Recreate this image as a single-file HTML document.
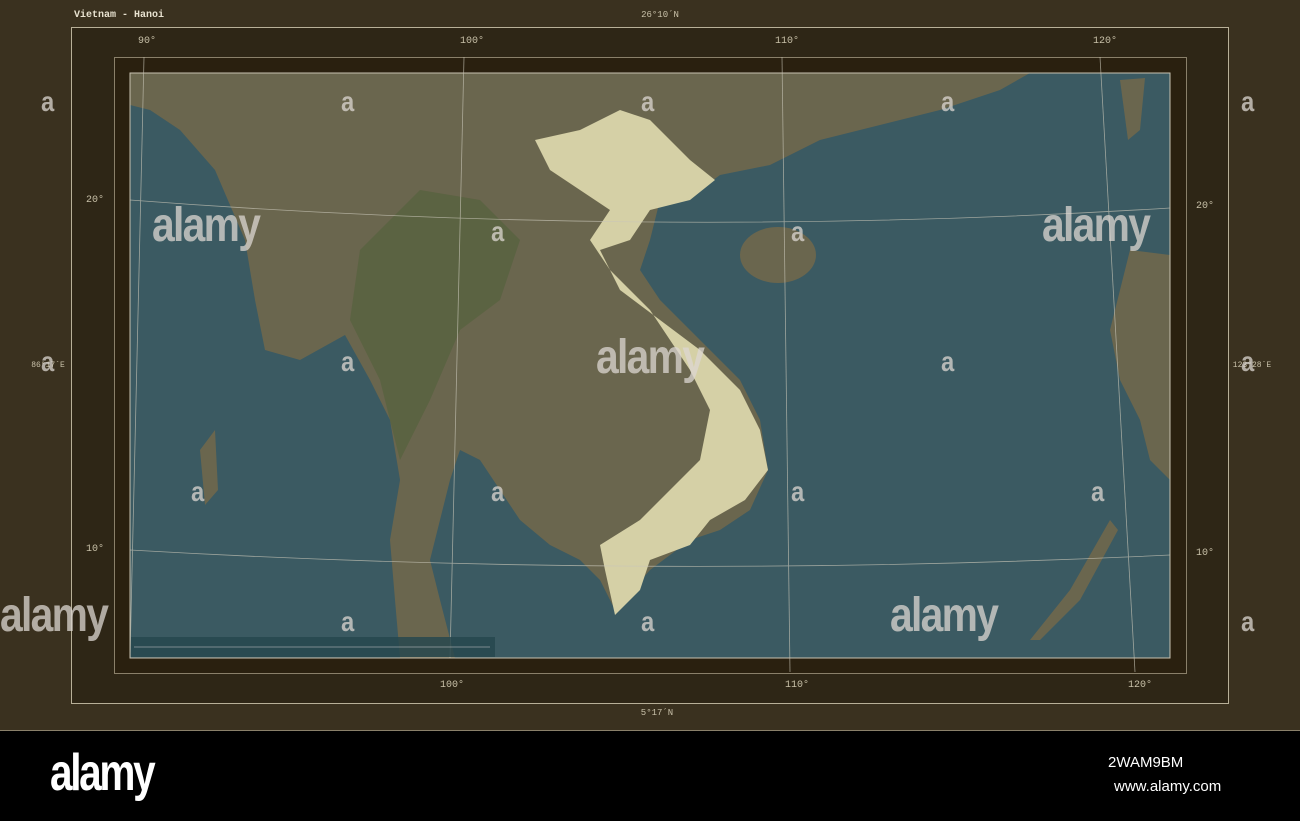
<!DOCTYPE html>
<html><head><meta charset="utf-8"><style>
body{margin:0;width:1300px;height:821px;overflow:hidden;background:#000;font-family:"Liberation Mono",monospace;}
.t{position:absolute;color:#c8c0a8;font-size:10px;white-space:nowrap;transform:translateX(-50%);}
.wm{position:absolute;font-family:"Liberation Sans",sans-serif;font-weight:bold;color:rgba(220,215,210,.75);letter-spacing:-2px;transform:scaleX(.85);transform-origin:left top;}
</style></head><body>
<div style="position:absolute;left:0;top:0;width:1300px;height:730px;background:#3a311f;border-bottom:1px solid #8a806a"></div>
<div style="position:absolute;left:71px;top:27px;width:1156px;height:675px;border:1px solid #b8b098;background:#2e2616"></div>
<div style="position:absolute;left:114px;top:57px;width:1071px;height:615px;border:1px solid #8a806a;background:#2a200f"></div>
<svg style="position:absolute;left:0;top:0" width="1300" height="730">
<rect x="130" y="73" width="1040" height="585" fill="#3b5a62"/>
<polygon fill="#6a664e" points="130,73 1030,73 1000,90 940,110 880,125 820,140 770,165 720,175 700,190 660,200 650,240 640,270 660,300 700,340 740,380 760,420 768,470 750,510 720,530 690,540 650,570 615,610 600,580 580,560 550,545 520,520 500,490 480,460 460,450 450,480 440,520 430,560 440,600 455,658 400,658 395,600 390,540 400,480 390,420 370,380 345,335 300,360 265,350 255,300 245,240 215,170 180,130 150,110 130,105"/>
<polygon fill="#52603a" opacity=".6" points="360,250 420,190 480,200 520,240 500,300 460,330 430,400 400,460 380,380 350,320"/>
<polygon fill="#d5d0a6" points="535,140 580,130 620,110 650,120 690,160 715,180 690,200 650,210 630,240 600,250 620,290 660,320 700,350 740,390 760,430 768,470 745,500 710,520 690,545 650,560 640,590 615,615 605,570 600,545 640,520 670,490 700,460 710,410 690,370 650,310 610,270 590,240 610,210 580,190 550,170"/>
<ellipse cx="778" cy="255" rx="38" ry="28" fill="#6a664e"/>
<polygon fill="#6a664e" points="1130,250 1170,255 1170,480 1150,460 1140,420 1120,380 1110,330"/>
<polygon fill="#6a664e" points="1120,80 1145,78 1140,130 1128,140"/>
<polygon fill="#6a664e" points="1030,640 1070,590 1110,520 1118,530 1080,600 1040,640"/>
<polygon fill="#6a664e" points="200,450 215,430 218,490 205,505"/>
<g stroke="#c9c6b8" stroke-width=".8" fill="none" opacity=".7">
<path d="M130,200 Q650,240 1170,208"/><path d="M130,550 Q650,580 1170,555"/>
<path d="M144,57 L130,658"/><path d="M464,57 L450,658"/><path d="M782,57 L790,672"/><path d="M1100,57 L1135,672"/>
</g>
<rect x="130" y="73" width="1040" height="585" fill="none" stroke="#c8c2b0" stroke-width="1"/>
<rect x="131" y="637" width="364" height="20" fill="#27484f" opacity=".85"/>
<line x1="134" y1="647" x2="490" y2="647" stroke="#ccc" stroke-width=".6"/>
</svg>
<div class="t" style="top:10px;font-weight:bold;color:#e8e2d0;transform:none;left:74px">Vietnam - Hanoi</div>
<div class="t" style="left:660px;top:10px;font-size:9px">26°10´N</div>
<div class="t" style="left:657px;top:708px;font-size:9px">5°17´N</div>
<div class="t" style="left:147px;top:36px">90°</div><div class="t" style="left:472px;top:36px">100°</div><div class="t" style="left:787px;top:36px">110°</div><div class="t" style="left:1105px;top:36px">120°</div>
<div class="t" style="left:452px;top:680px">100°</div><div class="t" style="left:797px;top:680px">110°</div><div class="t" style="left:1140px;top:680px">120°</div>
<div class="t" style="left:95px;top:195px">20°</div><div class="t" style="left:95px;top:544px">10°</div>
<div class="t" style="left:1205px;top:201px">20°</div><div class="t" style="left:1205px;top:548px">10°</div>
<div class="t" style="left:48px;top:361px;font-size:8px">86°17´E</div><div class="t" style="left:1252px;top:361px;font-size:8px">123°28´E</div>
<div class="wm" style="left:152px;top:198px;font-size:48px">alamy</div>
<div class="wm" style="left:1042px;top:198px;font-size:48px">alamy</div>
<div class="wm" style="left:596px;top:330px;font-size:48px">alamy</div>
<div class="wm" style="left:0px;top:588px;font-size:48px">alamy</div>
<div class="wm" style="left:890px;top:588px;font-size:48px">alamy</div>
<div class="wm" style="left:41px;top:86px;font-size:28px">a</div><div class="wm" style="left:341px;top:86px;font-size:28px">a</div><div class="wm" style="left:641px;top:86px;font-size:28px">a</div><div class="wm" style="left:941px;top:86px;font-size:28px">a</div><div class="wm" style="left:1241px;top:86px;font-size:28px">a</div>
<div class="wm" style="left:41px;top:346px;font-size:28px">a</div><div class="wm" style="left:341px;top:346px;font-size:28px">a</div><div class="wm" style="left:941px;top:346px;font-size:28px">a</div><div class="wm" style="left:1241px;top:346px;font-size:28px">a</div>
<div class="wm" style="left:191px;top:476px;font-size:28px">a</div><div class="wm" style="left:491px;top:476px;font-size:28px">a</div><div class="wm" style="left:791px;top:476px;font-size:28px">a</div><div class="wm" style="left:1091px;top:476px;font-size:28px">a</div>
<div class="wm" style="left:491px;top:216px;font-size:28px">a</div><div class="wm" style="left:791px;top:216px;font-size:28px">a</div>
<div class="wm" style="left:341px;top:606px;font-size:28px">a</div><div class="wm" style="left:641px;top:606px;font-size:28px">a</div><div class="wm" style="left:1241px;top:606px;font-size:28px">a</div>
<div style="position:absolute;left:50px;top:743px;font-family:'Liberation Sans',sans-serif;font-weight:bold;font-size:52px;color:#fff;letter-spacing:-3px;transform:scaleX(.78);transform-origin:left top">alamy</div>
<div style="position:absolute;left:1108px;top:754px;font-family:'Liberation Sans',sans-serif;font-size:15px;color:#fff">2WAM9BM</div>
<div style="position:absolute;left:1114px;top:778px;font-family:'Liberation Sans',sans-serif;font-size:15px;color:#fff">www.alamy.com</div>
</body></html>
